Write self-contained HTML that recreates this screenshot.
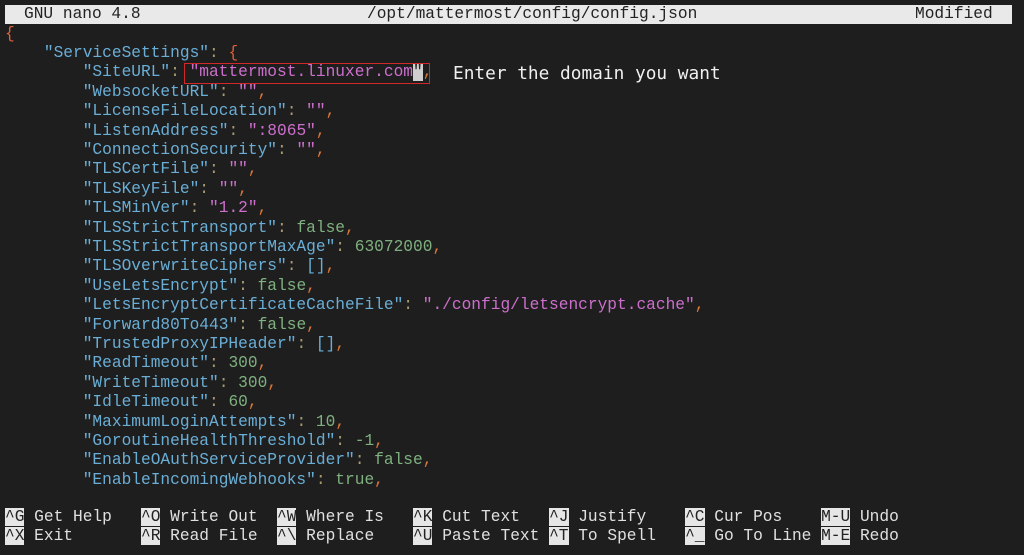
<!DOCTYPE html>
<html><head><meta charset="utf-8"><style>
html,body{margin:0;padding:0;background:#1e1e1e;width:1024px;height:555px;overflow:hidden}
body{position:relative;font-family:"Liberation Mono","DejaVu Sans Mono",monospace;font-size:16.2px;color:#ddd}
.bar{position:absolute;left:5px;top:5px;width:1007px;height:19px;background:#e9e9e9;color:#222}
.bar span{position:absolute;top:0;line-height:19px;white-space:pre}
pre{margin:0;font:inherit;position:absolute;left:5px;top:24.5px;line-height:19.4px;white-space:pre}
.k{color:#6aaed6}.s{color:#cc6fcc}.n{color:#7fb07f}.c{color:#a89a70}.m{color:#d9763a}.b{color:#e0603a}.a{color:#6aaed6}
.box{position:absolute;left:184px;top:63px;width:246px;height:21px;border:1.5px solid #d02828;box-sizing:border-box}
.cur{background:#cfcfcf;color:#222}
.note{position:absolute;left:453px;top:63px;font-family:"DejaVu Sans Mono",monospace;font-size:17.8px;color:#f0f0f0;white-space:pre}
.foot{position:absolute;left:5px;top:508px;line-height:19.4px;color:#e0e0e0}
.h{background:#e6e6e6;color:#222}
</style></head><body>
<div class="bar"><span style="left:19px">GNU nano 4.8</span><span style="left:362px">/opt/mattermost/config/config.json</span><span style="left:910px">Modified</span></div>
<pre><span class="b">{</span>
    <span class="k">"ServiceSettings"</span><span class="c">: </span><span class="b">{</span>
        <span class="k">"SiteURL"</span><span class="c">: </span><span class="s">"mattermost.linuxer.com<span class="cur">"</span></span><span class="m">,</span>
        <span class="k">"WebsocketURL"</span><span class="c">: </span><span class="s">""</span><span class="m">,</span>
        <span class="k">"LicenseFileLocation"</span><span class="c">: </span><span class="s">""</span><span class="m">,</span>
        <span class="k">"ListenAddress"</span><span class="c">: </span><span class="s">":8065"</span><span class="m">,</span>
        <span class="k">"ConnectionSecurity"</span><span class="c">: </span><span class="s">""</span><span class="m">,</span>
        <span class="k">"TLSCertFile"</span><span class="c">: </span><span class="s">""</span><span class="m">,</span>
        <span class="k">"TLSKeyFile"</span><span class="c">: </span><span class="s">""</span><span class="m">,</span>
        <span class="k">"TLSMinVer"</span><span class="c">: </span><span class="s">"1.2"</span><span class="m">,</span>
        <span class="k">"TLSStrictTransport"</span><span class="c">: </span><span class="n">false</span><span class="m">,</span>
        <span class="k">"TLSStrictTransportMaxAge"</span><span class="c">: </span><span class="n">63072000</span><span class="m">,</span>
        <span class="k">"TLSOverwriteCiphers"</span><span class="c">: </span><span class="a">[]</span><span class="m">,</span>
        <span class="k">"UseLetsEncrypt"</span><span class="c">: </span><span class="n">false</span><span class="m">,</span>
        <span class="k">"LetsEncryptCertificateCacheFile"</span><span class="c">: </span><span class="s">"./config/letsencrypt.cache"</span><span class="m">,</span>
        <span class="k">"Forward80To443"</span><span class="c">: </span><span class="n">false</span><span class="m">,</span>
        <span class="k">"TrustedProxyIPHeader"</span><span class="c">: </span><span class="a">[]</span><span class="m">,</span>
        <span class="k">"ReadTimeout"</span><span class="c">: </span><span class="n">300</span><span class="m">,</span>
        <span class="k">"WriteTimeout"</span><span class="c">: </span><span class="n">300</span><span class="m">,</span>
        <span class="k">"IdleTimeout"</span><span class="c">: </span><span class="n">60</span><span class="m">,</span>
        <span class="k">"MaximumLoginAttempts"</span><span class="c">: </span><span class="n">10</span><span class="m">,</span>
        <span class="k">"GoroutineHealthThreshold"</span><span class="c">: </span><span class="n">-1</span><span class="m">,</span>
        <span class="k">"EnableOAuthServiceProvider"</span><span class="c">: </span><span class="n">false</span><span class="m">,</span>
        <span class="k">"EnableIncomingWebhooks"</span><span class="c">: </span><span class="n">true</span><span class="m">,</span></pre>
<div class="box"></div>
<div class="note">Enter the domain you want</div>
<pre class="foot"><span class="h">^G</span> Get Help   <span class="h">^O</span> Write Out  <span class="h">^W</span> Where Is   <span class="h">^K</span> Cut Text   <span class="h">^J</span> Justify    <span class="h">^C</span> Cur Pos    <span class="h">M-U</span> Undo
<span class="h">^X</span> Exit       <span class="h">^R</span> Read File  <span class="h">^\</span> Replace    <span class="h">^U</span> Paste Text <span class="h">^T</span> To Spell   <span class="h">^_</span> Go To Line <span class="h">M-E</span> Redo</pre>
</body></html>
